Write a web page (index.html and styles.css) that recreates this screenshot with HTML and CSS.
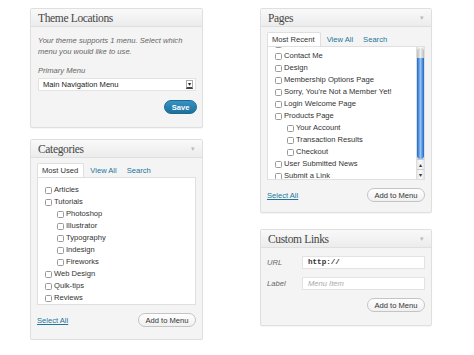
FILE: index.html
```html
<!DOCTYPE html>
<html lang="en">
<head>
    <meta charset="UTF-8">
    <title>Menus</title>
    <link rel="stylesheet" href="styles.css">
</head>
<body>
    <div class="menus">
        <div class="column col-left">
            <div class="panel theme-panel">
                <div class="panel-head"><h3>Theme Locations</h3></div>
                <div class="panel-body">
                    <p class="note">Your theme supports 1 menu. Select which menu you would like to use.</p>
                    <p class="note field-label">Primary Menu</p>
                    <div class="select">
                        <span>Main Navigation Menu</span>
                        <span class="select-arrow">&#9662;</span>
                    </div>
                    <div class="actions right">
                        <button class="btn-save">Save</button>
                    </div>
                </div>
            </div>

            <div class="panel">
                <div class="panel-head"><h3>Categories</h3><span class="toggle">&#9662;</span></div>
                <div class="panel-body">
                    <div class="tabs">
                        <span class="tab active">Most Used</span>
                        <a href="#" class="tab">View All</a>
                        <a href="#" class="tab">Search</a>
                    </div>
                    <div class="checklist cat-list">
                        <ul>
                            <li><span class="box"></span>Articles</li>
                            <li><span class="box"></span>Tutorials</li>
                            <li class="child"><span class="box"></span>Photoshop</li>
                            <li class="child"><span class="box"></span>Illustrator</li>
                            <li class="child"><span class="box"></span>Typography</li>
                            <li class="child"><span class="box"></span>Indesign</li>
                            <li class="child"><span class="box"></span>Fireworks</li>
                            <li><span class="box"></span>Web Design</li>
                            <li><span class="box"></span>Quik-tips</li>
                            <li><span class="box"></span>Reviews</li>
                        </ul>
                    </div>
                    <div class="actions split">
                        <a href="#" class="select-all">Select All</a>
                        <button class="btn-add">Add to Menu</button>
                    </div>
                </div>
            </div>
        </div>

        <div class="column col-right">
            <div class="panel pages-panel">
                <div class="panel-head"><h3>Pages</h3><span class="toggle">&#9662;</span></div>
                <div class="panel-body">
                    <div class="tabs">
                        <span class="tab active">Most Recent</span>
                        <a href="#" class="tab">View All</a>
                        <a href="#" class="tab">Search</a>
                    </div>
                    <div class="checklist page-list">
                        <ul class="scrolled">
                            <li><span class="box"></span></li>
                            <li><span class="box"></span>Contact Me</li>
                            <li><span class="box"></span>Design</li>
                            <li><span class="box"></span>Membership Options Page</li>
                            <li><span class="box"></span>Sorry, You're Not a Member Yet!</li>
                            <li><span class="box"></span>Login Welcome Page</li>
                            <li><span class="box"></span>Products Page</li>
                            <li class="child"><span class="box"></span>Your Account</li>
                            <li class="child"><span class="box"></span>Transaction Results</li>
                            <li class="child"><span class="box"></span>Checkout</li>
                            <li><span class="box"></span>User Submitted News</li>
                            <li><span class="box"></span>Submit a Link</li>
                        </ul>
                        <div class="scrollbar">
                            <span class="track-cap"></span>
                            <span class="thumb"></span>
                            <span class="arrow">&#9652;</span>
                            <span class="arrow">&#9662;</span>
                        </div>
                    </div>
                    <div class="actions split">
                        <a href="#" class="select-all">Select All</a>
                        <button class="btn-add">Add to Menu</button>
                    </div>
                </div>
            </div>

            <div class="panel links-panel">
                <div class="panel-head"><h3>Custom Links</h3><span class="toggle">&#9662;</span></div>
                <div class="panel-body">
                    <div class="link-row">
                        <label class="note">URL</label>
                        <div class="input mono">http://</div>
                    </div>
                    <div class="link-row">
                        <label class="note">Label</label>
                        <div class="input placeholder">Menu Item</div>
                    </div>
                    <div class="actions right">
                        <button class="btn-add">Add to Menu</button>
                    </div>
                </div>
            </div>
        </div>
    </div>
</body>
</html>
```

FILE: styles.css
```css
:root {
    --border: #dfdfdf;
    --panel-bg: #f4f4f4;
    --link: #21759b;
    --text: #333;
}

* {
    margin: 0;
    padding: 0;
    box-sizing: border-box;
}

body {
    background: #fff;
    font-family: 'Liberation Sans', Arial, sans-serif;
    font-size: 7.6px;
    color: var(--text);
}

.menus {
    display: flex;
    gap: 57px;
    padding: 8px 0 0 30px;
}

.column {
    display: flex;
    flex-direction: column;
}

.col-left {
    width: 173px;
    gap: 11px;
}

.col-right {
    width: 172px;
    gap: 16px;
}

/* Panels */
.panel {
    background: var(--panel-bg);
    border: 1px solid var(--border);
    border-radius: 2px;
    box-shadow: 0 1px 1px rgba(0, 0, 0, 0.04);
}

.panel-head {
    height: 18px;
    padding: 0 7px;
    display: flex;
    align-items: center;
    justify-content: space-between;
    background: linear-gradient(#f9f9f9, #ececec);
    border-bottom: 1px solid var(--border);
}

.panel-head h3 {
    font-family: 'Liberation Serif', Georgia, serif;
    font-weight: normal;
    font-size: 11.5px;
    letter-spacing: -0.35px;
    color: #464646;
}

.toggle {
    color: #bbb;
    font-size: 7px;
}

.panel-body {
    padding: 5px 6px 12px;
}

.pages-panel .panel-body {
    padding-bottom: 10px;
}

/* Theme locations */
.theme-panel .panel-body {
    padding: 8px 6px 13px 7px;
}

.note {
    font-style: italic;
    color: #666;
    line-height: 11px;
}

.field-label {
    margin-top: 8px;
}

.select {
    margin-top: 2px;
    height: 13px;
    background: #fff;
    border: 1px solid #e3e3e3;
    display: flex;
    align-items: center;
    justify-content: space-between;
    padding: 0 2px 0 4px;
    color: #222;
}

.select-arrow {
    width: 7px;
    height: 9px;
    border: 1px solid #aaa;
    border-bottom-width: 2px;
    border-bottom-color: #444;
    font-size: 6px;
    line-height: 6px;
    text-align: center;
    color: #222;
}

.actions {
    display: flex;
    align-items: center;
}

.actions.right {
    justify-content: flex-end;
    margin-top: 9px;
}

.actions.split {
    justify-content: space-between;
    margin-top: 8px;
}

.btn-save {
    width: 33px;
    height: 14px;
    border: 1px solid #1b6a92;
    border-radius: 8px;
    background: linear-gradient(#3593c4, #1f6f9c);
    color: #fff;
    font-family: 'Liberation Sans', Arial, sans-serif;
    font-weight: bold;
    font-size: 7.6px;
    margin-right: -1px;
}

.btn-add {
    width: 58px;
    height: 14px;
    border: 1px solid #c4c4c4;
    border-radius: 8px;
    background: linear-gradient(#fff, #f0f0f0);
    color: #333;
    font-family: 'Liberation Sans', Arial, sans-serif;
    font-size: 7.6px;
}

.select-all {
    color: var(--link);
}

/* Tabs and checklists */
.tabs {
    display: flex;
    align-items: flex-end;
    height: 14px;
}

.tab {
    padding: 0 6px 0 4px;
    line-height: 13px;
    color: var(--link);
    text-decoration: none;
}

.tab.active {
    color: #333;
    background: #fff;
    border: 1px solid var(--border);
    border-bottom: none;
    border-radius: 2px 2px 0 0;
    height: 14px;
    padding: 0 5px 0 4px;
    margin-right: 2px;
}

.checklist {
    background: #fff;
    border: 1px solid var(--border);
    overflow: hidden;
    position: relative;
}

.checklist ul {
    list-style: none;
}

.checklist li {
    height: 12px;
    display: flex;
    align-items: center;
    gap: 2px;
    padding-left: 7px;
    color: #333;
    white-space: nowrap;
}

.checklist li.child {
    padding-left: 19px;
}

.box {
    width: 7px;
    height: 7px;
    border: 1px solid #999;
    border-radius: 1.5px;
    background: #fff;
    margin-top: 3px;
    flex-shrink: 0;
}

.cat-list {
    height: 128px;
    padding-top: 5px;
}

.page-list {
    height: 134px;
    display: flex;
}

.page-list ul {
    flex: 1;
}

.scrolled {
    margin-top: -10px;
}

.scrollbar {
    width: 8px;
    background: linear-gradient(90deg, #e6e6e6, #fafafa 50%, #e6e6e6);
    border-left: 1px solid #ddd;
    display: flex;
    flex-direction: column;
    align-items: center;
    padding-top: 1px;
}

.track-cap {
    width: 7px;
    height: 10px;
    border-radius: 4px 4px 0 0;
    background: linear-gradient(90deg, #bbb, #eee 50%, #bbb);
}

.thumb {
    width: 7px;
    height: 101px;
    border-radius: 0 0 4px 4px;
    background: linear-gradient(90deg, #1e64c8, #8fc4f4 50%, #1e64c8);
}

.arrow {
    height: 10px;
    width: 8px;
    font-size: 6px;
    line-height: 10px;
    text-align: center;
    color: #333;
    border-top: 1px solid #ccc;
}

/* Custom links */
.links-panel .panel-body {
    padding: 8px 6px 13px;
}

.link-row {
    display: flex;
    align-items: center;
    margin-bottom: 8px;
}

.link-row label {
    width: 35px;
}

.input {
    flex: 1;
    height: 13px;
    background: #fff;
    border: 1px solid #e3e3e3;
    padding: 0 5px;
    line-height: 11px;
}

.input.mono {
    font-family: 'Liberation Mono', 'Courier New', monospace;
    font-weight: bold;
    color: #333;
}

.input.placeholder {
    font-style: italic;
    color: #aaa;
}

.links-panel .actions.right {
    margin-top: 0;
}
```
